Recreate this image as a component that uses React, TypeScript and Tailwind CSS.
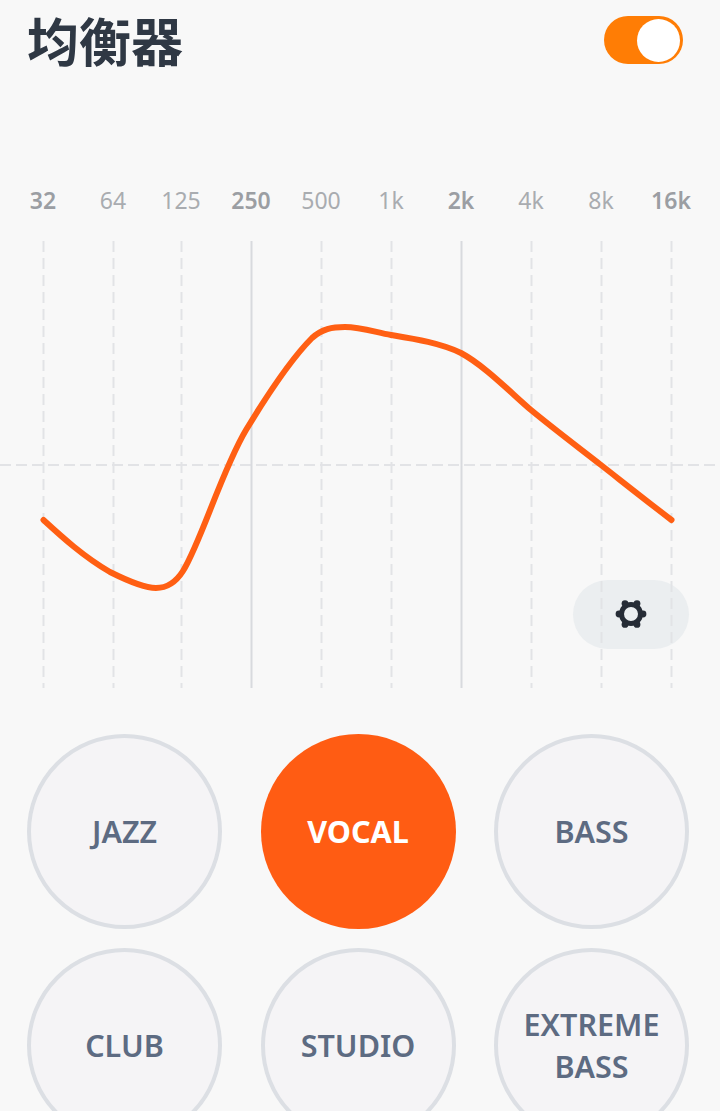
const bands = [
	{ label: "32", x: 43, bold: true },
	{ label: "64", x: 113, bold: false },
	{ label: "125", x: 181, bold: false },
	{ label: "250", x: 251, bold: true },
	{ label: "500", x: 321, bold: false },
	{ label: "1k", x: 391, bold: false },
	{ label: "2k", x: 461, bold: true },
	{ label: "4k", x: 531, bold: false },
	{ label: "8k", x: 601, bold: false },
	{ label: "16k", x: 671, bold: true },
];

const presets = [
	{ name: ["JAZZ"], active: false },
	{ name: ["VOCAL"], active: true },
	{ name: ["BASS"], active: false },
	{ name: ["CLUB"], active: false },
	{ name: ["STUDIO"], active: false },
	{ name: ["EXTREME", "BASS"], active: false },
];

const curve =
	"M43.5 520 C62 537 84 557 110 572 C128 581 144 588 156 588 C168 588 176 582 183 571 C201 542 222 470 246 430 C266 397 290 360 312 338 C322 329 332 327 345 327 C360 327 375 332 391 335 C415 339 440 343 461 353 C485 366 510 392 531 410 C554 429 578 447 601 465 C624 483 648 502 671.5 520";

const Gear = () => (
	<svg width="32" height="32" viewBox="0 0 32 32" fill="#262c36" className="-mt-px">
		<circle cx="16" cy="16" r="9.5" fill="none" stroke="#262c36" strokeWidth="5" />
		<circle cx="28" cy="16" r="3.4" />
		<circle cx="4" cy="16" r="3.4" />
		<circle cx="22" cy="5.6" r="3.4" />
		<circle cx="10" cy="5.6" r="3.4" />
		<circle cx="22" cy="26.4" r="3.4" />
		<circle cx="10" cy="26.4" r="3.4" />
	</svg>
);

const App = () => {
	return (
		<div className="w-[720px] h-[1111px] overflow-hidden bg-[#f8f8f8] font-['Noto_Sans','Noto_Sans_CJK_SC',sans-serif]">
			{/* Header */}
			<div className="flex items-start justify-between pl-[27px] pr-[37px] pt-4 h-[183px]">
				<h1 className="text-[52px] leading-[54px] font-bold text-[#2f3844] -mt-[3px] font-['Noto_Sans_CJK_SC','Noto_Sans',sans-serif]">
					均衡器
				</h1>
				<div className="flex justify-end items-center w-[79px] h-12 rounded-full bg-[#ff7d05] pr-[3px]">
					<div className="w-[43px] h-[43px] rounded-full bg-white" />
				</div>
			</div>

			{/* Band labels */}
			<div className="flex h-[34px] pl-2">
				{bands.map((band) => (
					<div
						key={band.label}
						className={`w-[70px] text-center text-[23px] leading-[34px] ${
							band.label === "125" ? "-ml-[2px]" : ""
						} ${
							band.bold
								? "font-semibold text-[#9b9ea3]"
								: "font-normal text-[#a9acb0]"
						}`}
					>
						{band.label}
					</div>
				))}
			</div>

			{/* Curve */}
			<div className="relative mt-6 h-[447px]">
				<div className="absolute left-[573px] top-[339px] w-[116px] h-[69px] rounded-full bg-[#ebeef0] flex items-center justify-center">
					<Gear />
				</div>
				<svg
					className="absolute left-0 top-0"
					width="720"
					height="447"
					viewBox="0 241 720 447"
					fill="none"
				>
					<line x1="0" y1="465" x2="720" y2="465" stroke="#e2e3e6" strokeWidth="2" strokeDasharray="11 5" />
					{bands.map((band) => {
						const solid = band.x === 251 || band.x === 461;
						return (
							<line
								key={band.label}
								x1={band.x + 0.5}
								y1="241"
								x2={band.x + 0.5}
								y2="688"
								stroke={solid ? "#d8dade" : "#e2e3e6"}
								strokeWidth="2"
								strokeDasharray={solid ? undefined : "11 6"}
							/>
						);
					})}
					<path d={curve} stroke="#ff5f13" strokeWidth="6" strokeLinecap="round" strokeLinejoin="round" />
				</svg>
			</div>

			{/* Presets */}
			<div className="grid grid-cols-[195px_195px_195px] gap-x-[38.5px] gap-y-[19px] pl-[27px] mt-[46px]">
				{presets.map((preset) => (
					<div
						key={preset.name.join(" ")}
						className={`w-[195px] h-[195px] rounded-full flex flex-col items-center justify-center leading-[42px] pb-[2px] ${
							preset.active
								? "bg-[#ff5c13] text-white font-bold text-[30.6px]"
								: "bg-[#f5f4f6] border-4 border-[#dcdfe4] text-[#5d6b82] font-semibold text-[30.5px]"
						}`}
					>
						{preset.name.map((line) => (
							<span key={line}>{line}</span>
						))}
					</div>
				))}
			</div>
		</div>
	);
};

export default App;
